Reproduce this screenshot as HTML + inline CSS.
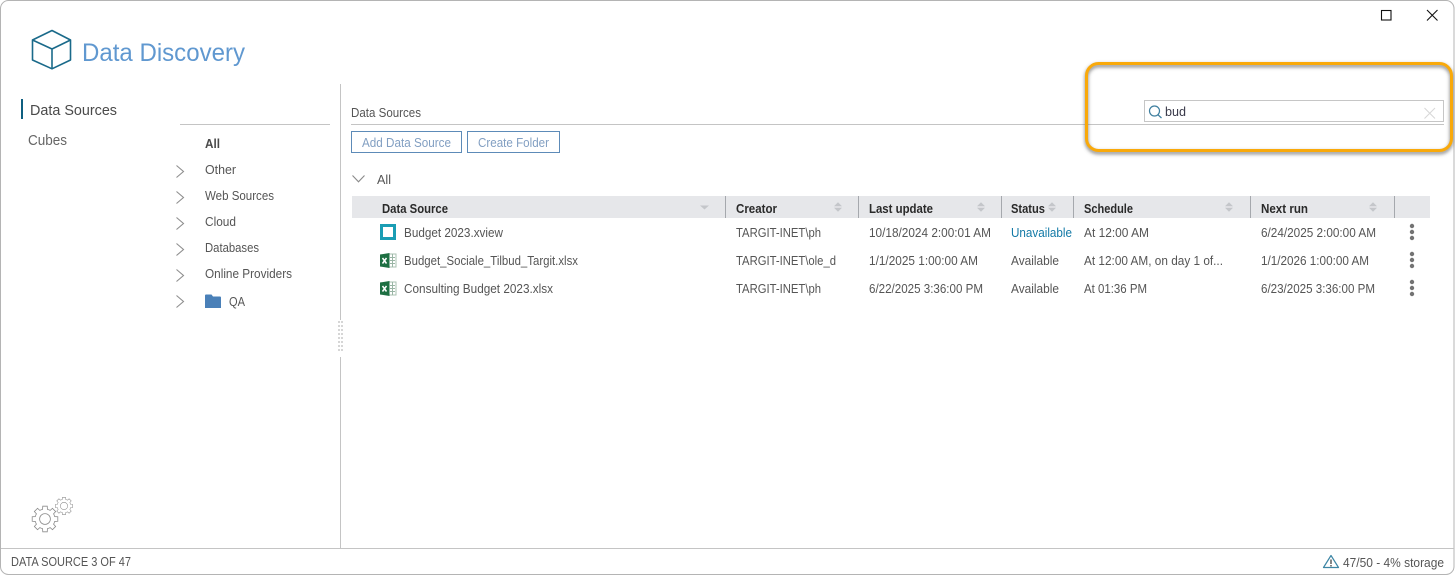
<!DOCTYPE html>
<html><head><meta charset="utf-8"><title>Data Discovery</title>
<style>
html,body{margin:0;padding:0;background:#fff;width:1455px;height:575px;overflow:hidden}
svg{display:block}
text{font-family:"Liberation Sans",sans-serif;font-size:12.5px;fill:#555}
.h{font-weight:bold;fill:#2a2a2a;font-size:12.5px}
</style></head><body>
<svg xmlns="http://www.w3.org/2000/svg" width="1455" height="575" viewBox="0 0 1455 575">
<defs>
<filter id="sh" x="-5%" y="-15%" width="110%" height="130%"><feGaussianBlur stdDeviation="1.800"/></filter>
<path id="tooth" d="M-3.83-9.24L-2.42-9.7L-2.26-12.8L2.26-12.8L2.42-9.7L3.83-9.24" fill="none"/>
<g id="gear"><use href="#tooth"/><use href="#tooth" transform="rotate(45)"/><use href="#tooth" transform="rotate(90)"/><use href="#tooth" transform="rotate(135)"/><use href="#tooth" transform="rotate(180)"/><use href="#tooth" transform="rotate(225)"/><use href="#tooth" transform="rotate(270)"/><use href="#tooth" transform="rotate(315)"/><circle r="5.4" fill="none"/></g>
<g id="xl"><rect x="389" y="1" width="7" height="13" fill="#fff" stroke="#a9c0b2" stroke-width="1"/><path d="M390 4.500h5M390 7.500h5M390 10.500h5M392.500 1v13" stroke="#9ab5a5" stroke-width="1" fill="none"/><path d="M380 1.500L389.500 0V15L380 13.500Z" fill="#1d6f42"/><path d="M382.500 5L386.500 10.500M386.500 5L382.500 10.500" stroke="#fff" stroke-width="1.500" fill="none"/></g>
<g id="dots" fill="#737373"><circle cx="1412" cy="0" r="2.200"/><circle cx="1412" cy="6" r="2.200"/><circle cx="1412" cy="12" r="2.200"/></g>
<g id="sort" fill="#c4c6ca"><path d="M-4 3.200L0-.8L4 3.200Z"/><path d="M-4 4.800L0 8.800L4 4.800Z"/></g>
</defs>
<rect width="1455" height="575" fill="#fff"/>
<rect x="0.500" y="0.500" width="1453.500" height="574" rx="8" fill="#fff" stroke="#b4b4b4"/>

<!-- window controls -->
<rect x="1381.500" y="10.500" width="9.500" height="9.500" fill="none" stroke="#111" stroke-width="1.100"/>
<path d="M1427 10L1437.500 20.500M1437.500 10L1427 20.500" stroke="#111" stroke-width="1.100" fill="none"/>

<!-- logo -->
<g fill="none" stroke="#1a6a8a" stroke-width="1.600" stroke-linejoin="round">
<path d="M52 30.500L70.500 40V60L52 68.800L32.500 60V40Z"/><path d="M32.500 40L52 49L70.500 40M52 49V68.800"/>
</g>
<text x="82" y="61" style="font-size:25px;fill:#6098d0" textLength="163" lengthAdjust="spacingAndGlyphs">Data Discovery</text>

<!-- left nav -->
<rect x="21" y="99" width="2" height="20" fill="#0f5f80"/>
<text x="30" y="115" style="font-size:15px;fill:#4a4a4a" textLength="87" lengthAdjust="spacingAndGlyphs">Data Sources</text>
<text x="28" y="145" style="font-size:15px;fill:#666" textLength="39" lengthAdjust="spacingAndGlyphs">Cubes</text>
<rect x="180" y="124" width="150" height="1" fill="#c4c4c4"/>
<text x="205" y="148" style="font-weight:bold;fill:#4a4a4a" textLength="15" lengthAdjust="spacingAndGlyphs">All</text>
<text x="205" y="174" textLength="31" lengthAdjust="spacingAndGlyphs">Other</text>
<text x="205" y="200" textLength="69" lengthAdjust="spacingAndGlyphs">Web Sources</text>
<text x="205" y="226" textLength="31" lengthAdjust="spacingAndGlyphs">Cloud</text>
<text x="205" y="252" textLength="54" lengthAdjust="spacingAndGlyphs">Databases</text>
<text x="205" y="278" textLength="87" lengthAdjust="spacingAndGlyphs">Online Providers</text>
<text x="229" y="306" textLength="16" lengthAdjust="spacingAndGlyphs">QA</text>
<g fill="none" stroke="#8e8e8e" stroke-width="1.100">
<path d="M176.500 165.500L183.500 171.500L176.500 177.500"/><path d="M176.500 191.500L183.500 197.500L176.500 203.500"/><path d="M176.500 217.500L183.500 223.500L176.500 229.500"/><path d="M176.500 243.500L183.500 249.500L176.500 255.500"/><path d="M176.500 269.500L183.500 275.500L176.500 281.500"/><path d="M176.500 295.500L183.500 301.500L176.500 307.500"/>
</g>
<path d="M205 308V295.500Q205 294.500 206 294.500H211.500L213 296.500H220Q221 296.500 221 297.500V308Z" fill="#4a80b8"/>

<!-- gears -->
<g stroke="#8c8c8c" stroke-width="0.800" fill="none">
<use href="#gear" transform="translate(45 519)"/>
<use href="#gear" transform="translate(64 506) scale(.68)"/>
</g>

<!-- divider -->
<rect x="340" y="84" width="1" height="236" fill="#c4c4c4"/>
<rect x="340" y="357" width="1" height="191" fill="#c4c4c4"/>
<g fill="#d6d6d6">
<path d="M338 321h2v2h-2zM341 321h2v2h-2zM338 325h2v2h-2zM341 325h2v2h-2zM338 329h2v2h-2zM341 329h2v2h-2zM338 333h2v2h-2zM341 333h2v2h-2zM338 337h2v2h-2zM341 337h2v2h-2zM338 341h2v2h-2zM341 341h2v2h-2zM338 345h2v2h-2zM341 345h2v2h-2zM338 349h2v2h-2zM341 349h2v2h-2z"/>
</g>

<!-- main header -->
<text x="351" y="117" textLength="70" lengthAdjust="spacingAndGlyphs">Data Sources</text>
<rect x="351" y="124" width="1093" height="1" fill="#c4c4c4"/>
<rect x="1144.500" y="100.500" width="299" height="21" fill="#fff" stroke="#c6c6c6"/>
<circle cx="1154.500" cy="111" r="5" fill="none" stroke="#3f7f9f" stroke-width="1.200"/>
<path d="M1158 114.800L1161.500 118" stroke="#3f7f9f" stroke-width="1.300"/>
<text x="1165" y="116" style="fill:#3a3a4a" textLength="21" lengthAdjust="spacingAndGlyphs">bud</text>
<path d="M1424.500 108L1435 118.500M1435 108L1424.500 118.500" stroke="#d8d8d8" stroke-width="1.100" fill="none"/>

<!-- buttons -->
<rect x="351.500" y="131.500" width="110" height="21" fill="#fff" stroke="#5d8bb8"/>
<text x="362" y="147" style="fill:#829fc2" textLength="89" lengthAdjust="spacingAndGlyphs">Add Data Source</text>
<rect x="467.500" y="131.500" width="92" height="21" fill="#fff" stroke="#5d8bb8"/>
<text x="478" y="147" style="fill:#829fc2" textLength="71" lengthAdjust="spacingAndGlyphs">Create Folder</text>

<!-- group -->
<path d="M352.500 175.500L358.500 181.800L364.500 175.500" fill="none" stroke="#8a8a8a" stroke-width="1.100"/>
<text x="377" y="184" textLength="14" lengthAdjust="spacingAndGlyphs">All</text>

<!-- table header -->
<rect x="352" y="196" width="1078" height="22" fill="#e6e7ea"/>
<g fill="#a5a8ad"><rect x="725" y="196" width="1" height="22"/><rect x="858" y="196" width="1" height="22"/><rect x="1001" y="196" width="1" height="22"/><rect x="1073" y="196" width="1" height="22"/><rect x="1250" y="196" width="1" height="22"/><rect x="1394" y="196" width="1" height="22"/></g>
<text class="h" x="382" y="213" textLength="66" lengthAdjust="spacingAndGlyphs">Data Source</text>
<text class="h" x="736" y="213" textLength="41" lengthAdjust="spacingAndGlyphs">Creator</text>
<text class="h" x="869" y="213" textLength="64" lengthAdjust="spacingAndGlyphs">Last update</text>
<text class="h" x="1011" y="213" textLength="34" lengthAdjust="spacingAndGlyphs">Status</text>
<text class="h" x="1084" y="213" textLength="49" lengthAdjust="spacingAndGlyphs">Schedule</text>
<text class="h" x="1261" y="213" textLength="47" lengthAdjust="spacingAndGlyphs">Next run</text>
<path d="M700 205.500H709L704.500 209.500Z" fill="#c4c6ca"/>
<use href="#sort" transform="translate(838 203)"/>
<use href="#sort" transform="translate(981 203)"/>
<use href="#sort" transform="translate(1052 203)"/>
<use href="#sort" transform="translate(1229 203)"/>
<use href="#sort" transform="translate(1373 203)"/>

<!-- rows -->
<rect x="381.500" y="225.500" width="13" height="13" fill="#fff" stroke="#1a9db4" stroke-width="3"/>
<use href="#xl" transform="translate(0 253)"/>
<use href="#xl" transform="translate(0 281)"/>

<text x="404" y="237" textLength="99" lengthAdjust="spacingAndGlyphs">Budget 2023.xview</text>
<text x="736" y="237" textLength="85" lengthAdjust="spacingAndGlyphs">TARGIT-INET\ph</text>
<text x="869" y="237" textLength="122" lengthAdjust="spacingAndGlyphs">10/18/2024 2:00:01 AM</text>
<text x="1011" y="237" style="fill:#1279a6" textLength="61" lengthAdjust="spacingAndGlyphs">Unavailable</text>
<text x="1084" y="237" textLength="65" lengthAdjust="spacingAndGlyphs">At 12:00 AM</text>
<text x="1261" y="237" textLength="115" lengthAdjust="spacingAndGlyphs">6/24/2025 2:00:00 AM</text>

<text x="404" y="265" textLength="174" lengthAdjust="spacingAndGlyphs">Budget_Sociale_Tilbud_Targit.xlsx</text>
<text x="736" y="265" textLength="100" lengthAdjust="spacingAndGlyphs">TARGIT-INET\ole_d</text>
<text x="869" y="265" textLength="109" lengthAdjust="spacingAndGlyphs">1/1/2025 1:00:00 AM</text>
<text x="1011" y="265" textLength="48" lengthAdjust="spacingAndGlyphs">Available</text>
<text x="1084" y="265" textLength="139" lengthAdjust="spacingAndGlyphs">At 12:00 AM, on day 1 of...</text>
<text x="1261" y="265" textLength="108" lengthAdjust="spacingAndGlyphs">1/1/2026 1:00:00 AM</text>

<text x="404" y="293" textLength="149" lengthAdjust="spacingAndGlyphs">Consulting Budget 2023.xlsx</text>
<text x="736" y="293" textLength="85" lengthAdjust="spacingAndGlyphs">TARGIT-INET\ph</text>
<text x="869" y="293" textLength="114" lengthAdjust="spacingAndGlyphs">6/22/2025 3:36:00 PM</text>
<text x="1011" y="293" textLength="48" lengthAdjust="spacingAndGlyphs">Available</text>
<text x="1084" y="293" textLength="63" lengthAdjust="spacingAndGlyphs">At 01:36 PM</text>
<text x="1261" y="293" textLength="114" lengthAdjust="spacingAndGlyphs">6/23/2025 3:36:00 PM</text>

<use href="#dots" transform="translate(0 226)"/>
<use href="#dots" transform="translate(0 254)"/>
<use href="#dots" transform="translate(0 282)"/>

<!-- status bar -->
<rect x="1" y="548" width="1453" height="1" fill="#c4c4c4"/>
<text x="11" y="566" textLength="120" lengthAdjust="spacingAndGlyphs">DATA SOURCE 3 OF 47</text>
<path d="M1331 555.500L1338.500 567.500H1323.500Z" fill="none" stroke="#3d86a5" stroke-width="1.200" stroke-linejoin="round"/>
<path d="M1331 559.500V564M1331 565V566.500" stroke="#444" stroke-width="1.300"/>
<text x="1343" y="567" textLength="101" lengthAdjust="spacingAndGlyphs">47/50 - 4% storage</text>

<!-- highlight -->
<rect x="1086.500" y="65.500" width="365" height="87" rx="12" fill="none" stroke="#6e6e6e" stroke-opacity=".8" stroke-width="3.500" filter="url(#sh)"/>
<rect x="1086.500" y="63.500" width="365" height="87" rx="12" fill="none" stroke="#f9a90a" stroke-width="3"/>
</svg>
</body></html>
